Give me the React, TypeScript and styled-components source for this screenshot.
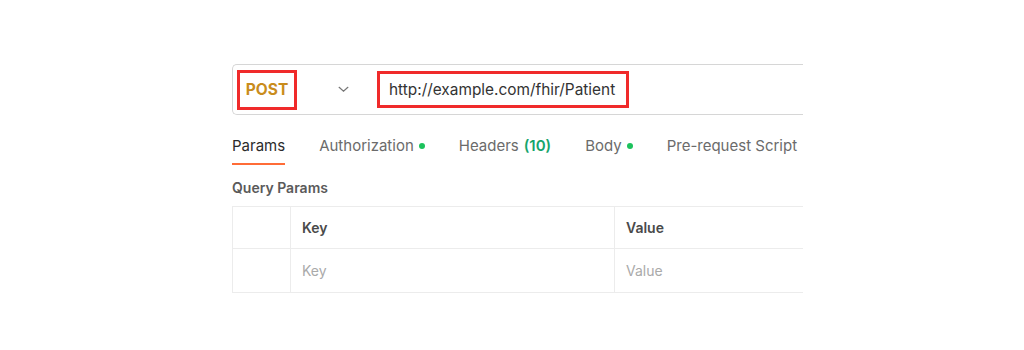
import styled, { createGlobalStyle } from 'styled-components'

const GlobalStyle = createGlobalStyle`
  body {
    margin: 0;
    background: #ffffff;
    font-family: Inter, "Noto Sans", sans-serif;
  }
`

const tabs = [
  { label: 'Params', active: true },
  { label: 'Authorization', dot: true },
  { label: 'Headers', count: '(10)' },
  { label: 'Body', dot: true },
  { label: 'Pre-request Script' },
]

export default function App() {
  return (
    <>
      <GlobalStyle />
      <Page>
        <Panel>
          <RequestBar>
            <MethodBox>POST</MethodBox>
            <Chevron viewBox="0 0 12 8" fill="none">
              <path d="M1 1.5 L6 6 L11 1.5" stroke="#777" strokeWidth="1.4" strokeLinecap="round" />
            </Chevron>
            <UrlBox>http://example.com/fhir/Patient</UrlBox>
          </RequestBar>

          <TabRow>
            {tabs.map(t => (
              <Tab key={t.label} $active={t.active}>
                {t.label}
                {t.count && <Count>{t.count}</Count>}
                {t.dot && <Dot />}
              </Tab>
            ))}
          </TabRow>

          <SectionTitle>Query Params</SectionTitle>

          <Table>
            <Row>
              <Cell />
              <Cell $head>Key</Cell>
              <Cell $head>Value</Cell>
            </Row>
            <Row $last>
              <Cell />
              <Cell $placeholder>Key</Cell>
              <Cell $placeholder>Value</Cell>
            </Row>
          </Table>
        </Panel>
      </Page>
    </>
  )
}

const Page = styled.div`
  width: 1024px;
  height: 350px;
  padding: 64px 0 0 232px;
  box-sizing: border-box;
  overflow: hidden;
`

const Panel = styled.div`
  width: 571px;
  display: flex;
  flex-direction: column;
`

const RequestBar = styled.div`
  height: 51px;
  box-sizing: border-box;
  border: 1px solid #d6d6d6;
  border-right: none;
  border-radius: 5px 0 0 5px;
  display: flex;
  align-items: center;
  padding-left: 4px;
`

const MethodBox = styled.div`
  width: 60px;
  height: 40px;
  box-sizing: border-box;
  border: 3px solid #f02a2a;
  display: flex;
  align-items: center;
  justify-content: center;
  color: #c98c1c;
  font-weight: 700;
  font-size: 15.5px;
`

const Chevron = styled.svg`
  width: 11px;
  height: 7px;
  margin-left: 41px;
`

const UrlBox = styled.div`
  margin-left: 28px;
  width: 252px;
  height: 37px;
  box-sizing: border-box;
  border: 3px solid #f02a2a;
  display: flex;
  align-items: center;
  padding-left: 9px;
  color: #333333;
  font-size: 15.4px;
`

const TabRow = styled.div`
  display: flex;
  gap: 34px;
  margin-top: 21px;
  height: 30px;
`

const Tab = styled.div<{ $active?: boolean }>`
  display: flex;
  align-items: flex-start;
  gap: 5px;
  font-size: 15px;
  color: ${p => (p.$active ? '#2b2b2b' : '#6b6b6b')};
  border-bottom: 2px solid ${p => (p.$active ? '#ff6c37' : 'transparent')};
  height: 27px;
`

const Count = styled.span`
  color: #16a56b;
  font-weight: 600;
`

const Dot = styled.span`
  width: 6px;
  height: 6px;
  border-radius: 50%;
  background: #1cc25c;
  margin-top: 7px;
`

const SectionTitle = styled.div`
  margin-top: 13px;
  font-size: 14px;
  font-weight: 600;
  color: #5a5a5a;
`

const Table = styled.div`
  margin-top: 10px;
  border: 1px solid #ececec;
  border-right: none;
`

const Row = styled.div<{ $last?: boolean }>`
  display: grid;
  grid-template-columns: 57px 324px 1fr;
  height: ${p => (p.$last ? '43px' : '41px')};
  border-bottom: ${p => (p.$last ? 'none' : '1px solid #ececec')};
`

const Cell = styled.div<{ $head?: boolean; $placeholder?: boolean }>`
  display: flex;
  align-items: center;
  padding-left: 11px;
  font-size: 14px;
  font-weight: ${p => (p.$head ? 600 : 400)};
  color: ${p => (p.$placeholder ? '#aaaaaa' : '#4a4a4a')};
  border-left: 1px solid #ececec;
  &:first-child {
    border-left: none;
  }
`
